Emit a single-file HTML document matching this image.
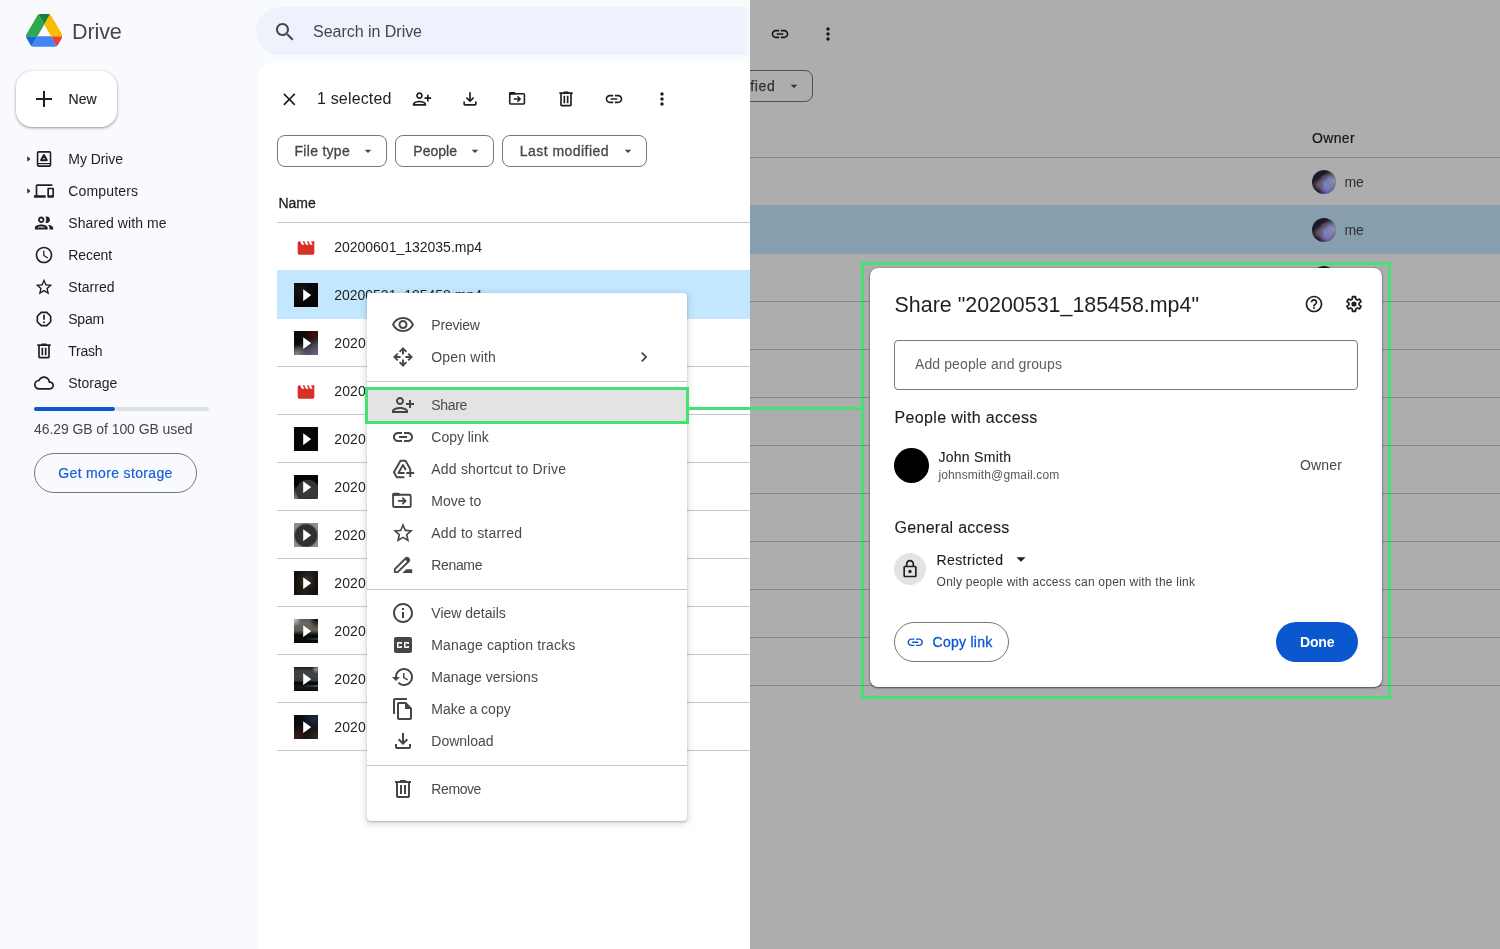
<!DOCTYPE html>
<html><head><meta charset="utf-8"><title>Drive</title>
<style>
html,body{margin:0;padding:0;}
body{width:1500px;height:949px;overflow:hidden;position:relative;background:#f8fafd;font-family:"Liberation Sans",sans-serif;}
.t{position:absolute;white-space:pre;font-family:"Liberation Sans",sans-serif;}
.i{position:absolute;display:block;}
.a{position:absolute;box-sizing:border-box;}
#L{position:absolute;left:0;top:0;width:750px;height:949px;overflow:hidden;background:#f8fafd;}
#R{position:absolute;left:750px;top:0;width:750px;height:949px;overflow:hidden;background:#adadad;}
#W{position:absolute;left:0;top:0;width:1500px;height:949px;will-change:transform;}
</style></head><body>
<div id="W">
<div id="L">
<svg class="i" style="left:25.9px;top:14.06px;width:36.5px;height:32.7px" viewBox="0 0 87.3 78">
<path d="m6.6 66.85 3.85 6.65c.8 1.4 1.95 2.5 3.3 3.3l13.75-23.8h-27.5c0 1.55.4 3.1 1.2 4.5z" fill="#1967d2"/>
<path d="m43.65 25-13.75-23.8c-1.35.8-2.5 1.9-3.3 3.3l-25.4 44a9.06 9.06 0 0 0 -1.2 4.5h27.5z" fill="#2ca84f"/>
<path d="m73.55 76.8c1.35-.8 2.5-1.9 3.3-3.3l1.6-2.75 7.65-13.25c.8-1.4 1.2-2.95 1.2-4.5h-27.502l5.852 11.5z" fill="#ea4335"/>
<path d="m43.65 25 13.75-23.8c-1.35-.8-2.9-1.2-4.5-1.2h-18.5c-1.6 0-3.15.45-4.5 1.2z" fill="#188038"/>
<path d="m59.8 53h-32.3l-13.75 23.8c1.35.8 2.9 1.2 4.5 1.2h50.8c1.6 0 3.15-.45 4.5-1.2z" fill="#4285f4"/>
<path d="m73.4 26.500-12.700-22c-.8-1.400-1.950-2.500-3.300-3.300l-13.750 23.800 16.150 28h27.450c0-1.550-.4-3.100-1.200-4.500z" fill="#fbbc04"/>
</svg>
<div class="t" style="left:72.00px;top:18.73px;font-size:21.6px;line-height:25.92px;color:#444746;letter-spacing:-0.138px;">Drive</div>
<div class="a" style="left:16px;top:71px;width:101px;height:56px;border-radius:16px;background:#fff;box-shadow:0 1px 2px rgba(0,0,0,.26),0 1px 3px 1px rgba(0,0,0,.12)"></div>
<div class="a" style="left:36px;top:97.9px;width:16px;height:1.8px;background:#1f1f1f"></div><div class="a" style="left:43.1px;top:90.8px;width:1.8px;height:16px;background:#1f1f1f"></div>
<div class="t" style="left:68.60px;top:90.85px;font-size:14px;line-height:16.80px;color:#1f1f1f;letter-spacing:-0.005px;-webkit-text-stroke:0.15px #1f1f1f;">New</div>
<div class="t" style="left:68.30px;top:150.85px;font-size:14px;line-height:16.80px;color:#1f1f1f;letter-spacing:-0.067px;">My Drive</div>
<svg class="i" style="left:34.00px;top:149.00px;width:20px;height:20px;" viewBox="0 0 24 24"><g fill="none" stroke="#1f1f1f"><rect x="4.300" y="3.450" width="15.500" height="17.100" rx="1.400" stroke-width="1.900"/><path d="M4.300 17.500h15.500" stroke-width="1.400"/><path d="M11.950 7.350l3.450 6.100H8.500z" stroke-width="2.450" stroke-linejoin="round"/></g></svg>
<div class="t" style="left:68.30px;top:182.85px;font-size:14px;line-height:16.80px;color:#1f1f1f;letter-spacing:0.159px;">Computers</div>
<svg class="i" style="left:34.00px;top:181.00px;width:20px;height:20px;" viewBox="0 0 24 24"><path fill="#1f1f1f" d="M4 6h18V4H4c-1.100 0-2 .9-2 2v11H0v3h14v-3H4V6zm19 2h-6c-.55 0-1 .45-1 1v10c0 .55.45 1 1 1h6c.55 0 1-.45 1-1V9c0-.55-.45-1-1-1zm-1 9h-4v-7h4v7z"/></svg>
<div class="t" style="left:68.30px;top:214.85px;font-size:14px;line-height:16.80px;color:#1f1f1f;letter-spacing:0.073px;">Shared with me</div>
<svg class="i" style="left:33.00px;top:212.30px;width:22px;height:22px;" viewBox="0 0 24 24"><path fill="#1f1f1f" d="M9 13.750c-2.340 0-7 1.170-7 3.500V19h14v-1.750c0-2.330-4.660-3.500-7-3.500zM4.340 17c.84-.58 2.870-1.250 4.660-1.250s3.820.67 4.660 1.250H4.340zM9 12c1.930 0 3.500-1.570 3.500-3.500S10.930 5 9 5 5.500 6.570 5.500 8.500 7.070 12 9 12zm0-5c.83 0 1.500.67 1.500 1.500S9.830 10 9 10s-1.500-.67-1.500-1.500S8.170 7 9 7zm7.040 6.810c1.160.84 1.960 1.960 1.960 3.440V19h4v-1.750c0-2.020-3.500-3.170-5.960-3.440zM15 12c1.930 0 3.500-1.570 3.500-3.500S16.930 5 15 5c-.54 0-1.040.13-1.500.35.63.89 1 1.980 1 3.150s-.37 2.260-1 3.150c.46.22.96.35 1.500.35z"/></svg>
<div class="t" style="left:68.30px;top:246.85px;font-size:14px;line-height:16.80px;color:#1f1f1f;letter-spacing:-0.093px;">Recent</div>
<svg class="i" style="left:34.00px;top:245.00px;width:20px;height:20px;" viewBox="0 0 24 24"><path fill="#1f1f1f" d="M11.99 2C6.470 2 2 6.480 2 12s4.470 10 9.990 10C17.520 22 22 17.520 22 12S17.520 2 11.990 2zM12 20c-4.420 0-8-3.580-8-8s3.580-8 8-8 8 3.580 8 8-3.580 8-8 8zm.5-13H11v6l5.250 3.150.75-1.230-4.500-2.670z"/></svg>
<div class="t" style="left:68.30px;top:278.85px;font-size:14px;line-height:16.80px;color:#1f1f1f;letter-spacing:0.068px;">Starred</div>
<svg class="i" style="left:34.00px;top:277.00px;width:20px;height:20px;" viewBox="0 0 24 24"><path fill="#1f1f1f" d="M22 9.24l-7.19-.62L12 2 9.19 8.63 2 9.24l5.46 4.73L5.82 21 12 17.27 18.180 21l-1.630-7.030L22 9.240zM12 15.400l-3.760 2.270 1-4.280-3.320-2.880 4.380-.380L12 6.100l1.710 4.040 4.380.380-3.320 2.880 1 4.280L12 15.400z"/></svg>
<div class="t" style="left:68.30px;top:310.85px;font-size:14px;line-height:16.80px;color:#1f1f1f;letter-spacing:-0.270px;">Spam</div>
<svg class="i" style="left:34.00px;top:309.00px;width:20px;height:20px;" viewBox="0 0 24 24"><path fill="#1f1f1f" d="M15.730 3H8.270L3 8.270v7.460L8.270 21h7.460L21 15.730V8.270L15.730 3zM19 14.900L14.900 19H9.100L5 14.900V9.100L9.100 5h5.800L19 9.100v5.800zM11 7h2v6h-2zm0 8h2v2h-2z"/></svg>
<div class="t" style="left:68.30px;top:342.85px;font-size:14px;line-height:16.80px;color:#1f1f1f;letter-spacing:-0.236px;">Trash</div>
<svg class="i" style="left:34.00px;top:341.00px;width:20px;height:20px;" viewBox="0 0 24 24"><path fill="#1f1f1f" d="M7 21q-.825 0-1.412-.587Q5 19.825 5 19V6H4V4h5V3h6v1h5v2h-1v13q0 .825-.587 1.413Q17.825 21 17 21zM17 6H7v13h10zM9 17h2V8H9zm4 0h2V8h-2z"/></svg>
<div class="t" style="left:68.30px;top:374.85px;font-size:14px;line-height:16.80px;color:#1f1f1f;letter-spacing:-0.021px;">Storage</div>
<svg class="i" style="left:34.00px;top:373.00px;width:20px;height:20px;" viewBox="0 0 24 24"><path fill="#1f1f1f" d="M19.350 10.040C18.670 6.590 15.640 4 12 4 9.110 4 6.600 5.640 5.350 8.040 2.340 8.360 0 10.910 0 14c0 3.310 2.690 6 6 6h13c2.760 0 5-2.240 5-5 0-2.640-2.050-4.780-4.650-4.960zM19 18H6c-2.210 0-4-1.790-4-4 0-2.050 1.530-3.760 3.560-3.970l1.070-.11.5-.95C8.080 7.140 9.940 6 12 6c2.620 0 4.880 1.860 5.390 4.430l.3 1.500 1.530.11c1.560.1 2.780 1.410 2.780 2.960 0 1.650-1.350 3-3 3z"/></svg>
<svg class="i" style="left:26.5px;top:156px;width:4px;height:6px" viewBox="0 0 4 6"><path d="M0.300 0.300l3 2.700-3 2.700z" fill="#1f1f1f"/></svg>
<svg class="i" style="left:26.5px;top:188px;width:4px;height:6px" viewBox="0 0 4 6"><path d="M0.300 0.300l3 2.700-3 2.700z" fill="#1f1f1f"/></svg>
<div class="a" style="left:34px;top:407px;width:175px;height:4px;border-radius:2px;background:#dde0e3"></div>
<div class="a" style="left:34px;top:407px;width:82px;height:4px;border-radius:2px;background:#f8fafd"></div>
<div class="a" style="left:34px;top:407px;width:80.5px;height:4px;border-radius:2px;background:#0b57d0"></div>
<div class="t" style="left:34.00px;top:420.85px;font-size:14px;line-height:16.80px;color:#444746;letter-spacing:-0.076px;">46.29 GB of 100 GB used</div>
<div class="a" style="left:34px;top:453px;width:163px;height:40px;border-radius:20px;border:1px solid #747775"></div>
<div class="t" style="left:58.30px;top:464.85px;font-size:14px;line-height:16.80px;color:#1a5fd4;letter-spacing:0.341px;-webkit-text-stroke:0.2px #1a5fd4;">Get more storage</div>
<div class="a" style="left:256px;top:7px;width:620px;height:48px;border-radius:24px;background:#edf2fc"></div>
<div class="a" style="left:745px;top:7px;width:5px;height:48px;background:rgba(248,250,253,.55)"></div>
<svg class="i" style="left:272.70px;top:19.90px;width:24px;height:24px;" viewBox="0 0 24 24"><path fill="#444746" d="M15.5 14h-.79l-.28-.27C15.41 12.59 16 11.11 16 9.5 16 5.91 13.09 3 9.5 3S3 5.91 3 9.5 5.91 16 9.5 16c1.61 0 3.09-.59 4.23-1.57l.27.28v.79l5 4.99L20.49 19l-4.99-5zm-6 0C7.01 14 5 11.99 5 9.5S7.01 5 9.5 5 14 7.01 14 9.5 11.99 14 9.5 14z"/></svg>
<div class="t" style="left:313.10px;top:21.69px;font-size:16px;line-height:19.20px;color:#444746;letter-spacing:-0.032px;">Search in Drive</div>
<div class="a" style="left:257px;top:63px;width:620px;height:920px;border-radius:16px;background:#fff"></div>
<svg class="i" style="left:278.65px;top:88.85px;width:20.7px;height:20.7px;" viewBox="0 0 24 24"><path fill="#1f1f1f" d="M19 6.41L17.59 5 12 10.59 6.41 5 5 6.41 10.59 12 5 17.59 6.41 19 12 13.41 17.59 19 19 17.59 13.41 12z"/></svg>
<div class="t" style="left:317.00px;top:88.69px;font-size:16px;line-height:19.20px;color:#1f1f1f;letter-spacing:0.166px;">1 selected</div>
<svg class="i" style="left:412.00px;top:89.00px;width:20px;height:20px;" viewBox="0 0 24 24"><path fill="#1f1f1f" d="M13 8c0-2.21-1.79-4-4-4S5 5.79 5 8s1.79 4 4 4 4-1.79 4-4zm-2 0c0 1.1-.9 2-2 2s-2-.9-2-2 .9-2 2-2 2 .9 2 2zM1 18v2h16v-2c0-2.66-5.33-4-8-4s-8 1.34-8 4zm2 0c.2-.71 3.3-2 6-2 2.69 0 5.78 1.28 6 2H3zm17-3v-3h3v-2h-3V7h-2v3h-3v2h3v3h2z"/></svg>
<svg class="i" style="left:460.00px;top:89.00px;width:20px;height:20px;" viewBox="0 0 24 24"><path fill="#1f1f1f" d="M12 16l-5-5 1.4-1.45 2.6 2.6V4h2v8.15l2.6-2.6L17 11zm-6 4q-.825 0-1.412-.587Q4 18.825 4 18v-3h2v3h12v-3h2v3q0 .825-.587 1.413Q18.825 20 18 20z"/></svg>
<svg class="i" style="left:508.00px;top:89.00px;width:20px;height:20px;" viewBox="0 0 24 24"><g transform="translate(-0.85,-0.45)"><rect x="2.950" y="6.200" width="17.600" height="12.300" rx="1.400" fill="none" stroke="#1f1f1f" stroke-width="1.900"/><path d="M2 7.500V5.600A1.500 1.500 0 0 1 3.500 4.100h5.300l2.600 2.600z" fill="#1f1f1f"/><path d="M7.800 12.400h7.400M12.200 9.200l3.200 3.200-3.200 3.200" fill="none" stroke="#1f1f1f" stroke-width="1.800"/></g></svg>
<svg class="i" style="left:556.00px;top:89.00px;width:20px;height:20px;" viewBox="0 0 24 24"><path fill="#1f1f1f" d="M7 21q-.825 0-1.412-.587Q5 19.825 5 19V6H4V4h5V3h6v1h5v2h-1v13q0 .825-.587 1.413Q17.825 21 17 21zM17 6H7v13h10zM9 17h2V8H9zm4 0h2V8h-2z"/></svg>
<svg class="i" style="left:604.00px;top:89.00px;width:20px;height:20px;" viewBox="0 0 24 24"><path fill="#1f1f1f" d="M3.9 12c0-1.71 1.39-3.1 3.1-3.1h4V7H7c-2.76 0-5 2.24-5 5s2.24 5 5 5h4v-1.9H7c-1.71 0-3.1-1.39-3.1-3.1zM8 13h8v-2H8v2zm9-6h-4v1.9h4c1.71 0 3.1 1.39 3.1 3.1s-1.39 3.1-3.1 3.1h-4V17h4c2.76 0 5-2.24 5-5s-2.24-5-5-5z"/></svg>
<svg class="i" style="left:652.00px;top:89.00px;width:20px;height:20px;" viewBox="0 0 24 24"><path fill="#1f1f1f" d="M12 8c1.1 0 2-.9 2-2s-.9-2-2-2-2 .9-2 2 .9 2 2 2zm0 2c-1.1 0-2 .9-2 2s.9 2 2 2 2-.9 2-2-.9-2-2-2zm0 6c-1.1 0-2 .9-2 2s.9 2 2 2 2-.9 2-2-.9-2-2-2z"/></svg>
<div class="a" style="left:277px;top:135px;width:110px;height:32px;border-radius:8px;border:1px solid #747775"></div>
<div class="t" style="left:294.50px;top:142.85px;font-size:14px;line-height:16.80px;color:#444746;letter-spacing:0.286px;-webkit-text-stroke:0.3px #444746;">File type</div>
<svg class="i" style="left:360.30px;top:142.90px;width:16px;height:16px;" viewBox="0 0 24 24"><path fill="#444746" d="M7 10l5 5 5-5z"/></svg>
<div class="a" style="left:395px;top:135px;width:99px;height:32px;border-radius:8px;border:1px solid #747775"></div>
<div class="t" style="left:413.30px;top:142.85px;font-size:14px;line-height:16.80px;color:#444746;letter-spacing:0.018px;-webkit-text-stroke:0.3px #444746;">People</div>
<svg class="i" style="left:467.20px;top:142.90px;width:16px;height:16px;" viewBox="0 0 24 24"><path fill="#444746" d="M7 10l5 5 5-5z"/></svg>
<div class="a" style="left:502px;top:135px;width:145px;height:32px;border-radius:8px;border:1px solid #747775"></div>
<div class="t" style="left:519.70px;top:142.85px;font-size:14px;line-height:16.80px;color:#444746;letter-spacing:0.471px;-webkit-text-stroke:0.3px #444746;">Last modified</div>
<svg class="i" style="left:620.20px;top:142.90px;width:16px;height:16px;" viewBox="0 0 24 24"><path fill="#444746" d="M7 10l5 5 5-5z"/></svg>
<div class="t" style="left:278.40px;top:194.85px;font-size:14px;line-height:16.80px;color:#1f1f1f;letter-spacing:-0.015px;-webkit-text-stroke:0.3px #1f1f1f;">Name</div>
<div class="a" style="left:277px;top:222px;width:480px;height:1px;background:#c7c7c7"></div>
<div class="a" style="left:277px;top:270px;width:480px;height:1px;background:#c7c7c7"></div>
<svg class="i" style="left:296.00px;top:238.30px;width:20px;height:20px;" viewBox="0 0 24 24"><path fill="#d93025" d="M18 4l2 4h-3l-2-4h-2l2 4h-3l-2-4H8l2 4H7L5 4H4c-1.100 0-1.990.9-1.990 2L2 18c0 1.100.9 2 2 2h16c1.100 0 2-.9 2-2V4h-4z"/></svg>
<div class="t" style="left:334.20px;top:239.15px;font-size:14px;line-height:16.80px;color:#1f1f1f;letter-spacing:-0.006px;">20200601_132035.mp4</div>
<div class="a" style="left:277px;top:270px;width:480px;height:49px;background:#c2e7ff"></div>
<div class="a" style="left:294px;top:283px;width:24px;height:24px;background:radial-gradient(circle at 20% 30%,#151212 0,#050505 60%)"></div>
<svg class="i" style="left:303px;top:288.8px;width:8.4px;height:12.400px" viewBox="0 0 8.400 12.400"><path d="M0.200 0.300v11.800l8-5.900z" fill="#fff"/></svg>
<div class="t" style="left:334.20px;top:287.15px;font-size:14px;line-height:16.80px;color:#1f1f1f;letter-spacing:-0.006px;">20200531_185458.mp4</div>
<div class="a" style="left:277px;top:366px;width:480px;height:1px;background:#c7c7c7"></div>
<div class="a" style="left:294px;top:331px;width:24px;height:24px;background:radial-gradient(circle at 85% 12%,rgba(70,18,14,.9) 0,rgba(70,18,14,0) 38%),radial-gradient(circle at 12% 95%,rgba(150,150,150,.8) 0,rgba(150,150,150,0) 30%),linear-gradient(150deg,#0a0808 0%,#0c0a0a 42%,#45434f 66%,#6c6888 100%)"></div>
<svg class="i" style="left:303px;top:336.8px;width:8.4px;height:12.400px" viewBox="0 0 8.400 12.400"><path d="M0.200 0.300v11.800l8-5.900z" fill="#fff"/></svg>
<div class="t" style="left:334.20px;top:335.15px;font-size:14px;line-height:16.80px;color:#1f1f1f;letter-spacing:0.161px;">2020</div>
<div class="a" style="left:277px;top:414px;width:480px;height:1px;background:#c7c7c7"></div>
<svg class="i" style="left:296.00px;top:382.30px;width:20px;height:20px;" viewBox="0 0 24 24"><path fill="#d93025" d="M18 4l2 4h-3l-2-4h-2l2 4h-3l-2-4H8l2 4H7L5 4H4c-1.100 0-1.990.9-1.990 2L2 18c0 1.100.9 2 2 2h16c1.100 0 2-.9 2-2V4h-4z"/></svg>
<div class="t" style="left:334.20px;top:383.15px;font-size:14px;line-height:16.80px;color:#1f1f1f;letter-spacing:0.161px;">2020</div>
<div class="a" style="left:277px;top:462px;width:480px;height:1px;background:#c7c7c7"></div>
<div class="a" style="left:294px;top:427px;width:24px;height:24px;background:#060606"></div>
<svg class="i" style="left:303px;top:432.8px;width:8.4px;height:12.400px" viewBox="0 0 8.400 12.400"><path d="M0.200 0.300v11.800l8-5.900z" fill="#fff"/></svg>
<div class="t" style="left:334.20px;top:431.15px;font-size:14px;line-height:16.80px;color:#1f1f1f;letter-spacing:0.161px;">2020</div>
<div class="a" style="left:277px;top:510px;width:480px;height:1px;background:#c7c7c7"></div>
<div class="a" style="left:294px;top:475px;width:24px;height:24px;background:radial-gradient(circle at 58% 68%,#3b3b39 0,#343432 52%,rgba(52,52,50,0) 56%),radial-gradient(circle at 0% 100%,#8a8a8a 0,rgba(138,138,138,0) 40%),radial-gradient(circle at 100% 100%,#7a7a78 0,rgba(122,122,120,0) 32%),#040404"></div>
<svg class="i" style="left:303px;top:480.8px;width:8.4px;height:12.400px" viewBox="0 0 8.400 12.400"><path d="M0.200 0.300v11.800l8-5.900z" fill="#fff"/></svg>
<div class="t" style="left:334.20px;top:479.15px;font-size:14px;line-height:16.80px;color:#1f1f1f;letter-spacing:0.161px;">2020</div>
<div class="a" style="left:277px;top:558px;width:480px;height:1px;background:#c7c7c7"></div>
<div class="a" style="left:294px;top:523px;width:24px;height:24px;background:radial-gradient(circle at 50% 52%,#343434 0,#2f2f2f 60%,#8c8c8c 72%,#909090 100%)"></div>
<svg class="i" style="left:303px;top:528.8px;width:8.4px;height:12.400px" viewBox="0 0 8.400 12.400"><path d="M0.200 0.300v11.800l8-5.900z" fill="#fff"/></svg>
<div class="t" style="left:334.20px;top:527.15px;font-size:14px;line-height:16.80px;color:#1f1f1f;letter-spacing:0.161px;">2020</div>
<div class="a" style="left:277px;top:606px;width:480px;height:1px;background:#c7c7c7"></div>
<div class="a" style="left:294px;top:571px;width:24px;height:24px;background:radial-gradient(circle at 55% 40%,#3a322a 0,rgba(58,50,42,0) 45%),linear-gradient(100deg,#0e0b08 0%,#241f1a 50%,#100d0b 100%)"></div>
<svg class="i" style="left:303px;top:576.8px;width:8.4px;height:12.400px" viewBox="0 0 8.400 12.400"><path d="M0.200 0.300v11.800l8-5.900z" fill="#fff"/></svg>
<div class="t" style="left:334.20px;top:575.15px;font-size:14px;line-height:16.80px;color:#1f1f1f;letter-spacing:0.161px;">2020</div>
<div class="a" style="left:277px;top:654px;width:480px;height:1px;background:#c7c7c7"></div>
<div class="a" style="left:294px;top:619px;width:24px;height:24px;background:linear-gradient(90deg,rgba(48,92,74,0) 45%,rgba(58,104,86,.55) 96%) 0 19px/24px 2px no-repeat,radial-gradient(circle at 4% 4%,#c4c4c4 0,rgba(196,196,196,0) 20%),radial-gradient(circle at 96% 4%,#040404 0,rgba(4,4,4,0) 26%),linear-gradient(180deg,#575755 0%,#6c6862 16%,#605a52 48%,#2c2824 60%,#070707 68%,#0a100e 84%,#050505 100%)"></div>
<svg class="i" style="left:303px;top:624.8px;width:8.4px;height:12.400px" viewBox="0 0 8.400 12.400"><path d="M0.200 0.300v11.800l8-5.900z" fill="#fff"/></svg>
<div class="t" style="left:334.20px;top:623.15px;font-size:14px;line-height:16.80px;color:#1f1f1f;letter-spacing:0.161px;">2020</div>
<div class="a" style="left:277px;top:702px;width:480px;height:1px;background:#c7c7c7"></div>
<div class="a" style="left:294px;top:667px;width:24px;height:24px;background:linear-gradient(90deg,rgba(60,110,100,0) 40%,rgba(84,132,120,.6) 97%) 0 18px/24px 2px no-repeat,radial-gradient(circle at 92% 10%,#9a9a9a 0,rgba(154,154,154,0) 14%),linear-gradient(180deg,#17191b 0%,#3a3d40 14%,#40444a 40%,#34383c 58%,#050505 64%,#070808 72%,#131a18 80%,#17130d 92%,#050505 100%)"></div>
<svg class="i" style="left:303px;top:672.8px;width:8.4px;height:12.400px" viewBox="0 0 8.400 12.400"><path d="M0.200 0.300v11.800l8-5.900z" fill="#fff"/></svg>
<div class="t" style="left:334.20px;top:671.15px;font-size:14px;line-height:16.80px;color:#1f1f1f;letter-spacing:0.161px;">2020</div>
<div class="a" style="left:277px;top:750px;width:480px;height:1px;background:#c7c7c7"></div>
<div class="a" style="left:294px;top:715px;width:24px;height:24px;background:radial-gradient(circle at 85% 15%,#1e2a44 0,rgba(30,42,68,0) 45%),radial-gradient(circle at 12% 90%,#3e1c1c 0,rgba(62,28,28,0) 42%),radial-gradient(circle at 90% 92%,#2c2c22 0,rgba(44,44,34,0) 40%),#0a090e"></div>
<svg class="i" style="left:303px;top:720.8px;width:8.4px;height:12.400px" viewBox="0 0 8.400 12.400"><path d="M0.200 0.300v11.800l8-5.900z" fill="#fff"/></svg>
<div class="t" style="left:334.20px;top:719.15px;font-size:14px;line-height:16.80px;color:#1f1f1f;letter-spacing:0.161px;">2020</div>
<div class="a" style="left:367px;top:293px;width:320px;height:528px;border-radius:4px;background:#fff;box-shadow:0 2px 6px 2px rgba(60,64,67,.15),0 1px 2px rgba(60,64,67,.3)"></div>
<div class="a" style="left:367px;top:381px;width:320px;height:1px;background:#c7c7c7"></div>
<div class="a" style="left:367px;top:589px;width:320px;height:1px;background:#c7c7c7"></div>
<div class="a" style="left:367px;top:765px;width:320px;height:1px;background:#c7c7c7"></div>
<div class="a" style="left:365px;top:387px;width:324px;height:37px;border:3px solid #46e173;background:#e3e3e3"></div>
<div class="t" style="left:431.30px;top:316.85px;font-size:14px;line-height:16.80px;color:#484b4a;letter-spacing:-0.200px;">Preview</div>
<svg class="i" style="left:391.00px;top:313.00px;width:24px;height:24px;" viewBox="0 0 24 24"><path fill="#444746" d="M12 6c3.79 0 7.17 2.13 8.82 5.5C19.17 14.87 15.79 17 12 17s-7.17-2.13-8.82-5.5C4.83 8.13 8.21 6 12 6m0-2C7 4 2.73 7.11 1 11.5 2.73 15.89 7 19 12 19s9.27-3.11 11-7.5C21.27 7.11 17 4 12 4zm0 5c1.38 0 2.5 1.12 2.5 2.5S13.38 14 12 14s-2.500-1.12-2.500-2.500S10.620 9 12 9m0-2c-2.480 0-4.500 2.020-4.500 4.500S9.520 16 12 16s4.500-2.020 4.500-4.500S14.480 7 12 7z"/></svg>
<div class="t" style="left:431.30px;top:348.85px;font-size:14px;line-height:16.80px;color:#484b4a;letter-spacing:0.184px;">Open with</div>
<svg class="i" style="left:391.00px;top:345.00px;width:24px;height:24px;" viewBox="0 0 24 24"><g fill="none" stroke="#444746" stroke-width="1.900" stroke-linejoin="miter"><path d="M12 3.600V9.600M8.600 6.800L12 3.400l3.400 3.400"/><path d="M12 20.400V14.400M8.600 17.200L12 20.600l3.400-3.400"/><path d="M3.600 12H9.600M6.800 8.600L3.400 12l3.400 3.400"/><path d="M20.400 12H14.400M17.200 8.600L20.600 12l-3.400 3.400"/></g></svg>
<div class="t" style="left:431.30px;top:396.85px;font-size:14px;line-height:16.80px;color:#484b4a;letter-spacing:-0.312px;">Share</div>
<svg class="i" style="left:391.00px;top:393.00px;width:24px;height:24px;" viewBox="0 0 24 24"><path fill="#444746" d="M13 8c0-2.21-1.79-4-4-4S5 5.79 5 8s1.79 4 4 4 4-1.79 4-4zm-2 0c0 1.1-.9 2-2 2s-2-.9-2-2 .9-2 2-2 2 .9 2 2zM1 18v2h16v-2c0-2.66-5.33-4-8-4s-8 1.34-8 4zm2 0c.2-.71 3.3-2 6-2 2.69 0 5.78 1.28 6 2H3zm17-3v-3h3v-2h-3V7h-2v3h-3v2h3v3h2z"/></svg>
<div class="t" style="left:431.30px;top:428.85px;font-size:14px;line-height:16.80px;color:#484b4a;letter-spacing:-0.022px;">Copy link</div>
<svg class="i" style="left:391.00px;top:425.00px;width:24px;height:24px;" viewBox="0 0 24 24"><path fill="#444746" d="M3.9 12c0-1.71 1.39-3.1 3.1-3.1h4V7H7c-2.76 0-5 2.24-5 5s2.24 5 5 5h4v-1.9H7c-1.71 0-3.1-1.39-3.1-3.1zM8 13h8v-2H8v2zm9-6h-4v1.9h4c1.71 0 3.1 1.39 3.1 3.1s-1.39 3.1-3.1 3.1h-4V17h4c2.76 0 5-2.24 5-5s-2.24-5-5-5z"/></svg>
<div class="t" style="left:431.30px;top:460.85px;font-size:14px;line-height:16.80px;color:#484b4a;letter-spacing:0.198px;">Add shortcut to Drive</div>
<svg class="i" style="left:391.00px;top:457.00px;width:24px;height:24px;" viewBox="0 0 24 24"><path fill="none" stroke="#444746" stroke-width="1.900" stroke-linejoin="round" d="M13.400 20.300H5.800L2.900 15.300 9.500 3.700h5l4.900 8.500M13.600 16H7.400l4.600-8 2.900 5"/><path fill="#444746" d="M20.200 20v-3h3v-1.900h-3v-3h-1.900v3h-3v1.900h3v3z"/></svg>
<div class="t" style="left:431.30px;top:492.85px;font-size:14px;line-height:16.80px;color:#484b4a;letter-spacing:0.027px;">Move to</div>
<svg class="i" style="left:391.00px;top:489.00px;width:24px;height:24px;" viewBox="0 0 24 24"><g transform="translate(-0.85,-0.45)"><rect x="2.950" y="6.200" width="17.600" height="12.300" rx="1.400" fill="none" stroke="#444746" stroke-width="1.900"/><path d="M2 7.500V5.600A1.500 1.500 0 0 1 3.500 4.100h5.300l2.600 2.600z" fill="#444746"/><path d="M7.800 12.400h7.400M12.200 9.200l3.200 3.200-3.200 3.200" fill="none" stroke="#444746" stroke-width="1.800"/></g></svg>
<div class="t" style="left:431.30px;top:524.85px;font-size:14px;line-height:16.80px;color:#484b4a;letter-spacing:0.212px;">Add to starred</div>
<svg class="i" style="left:391.00px;top:521.00px;width:24px;height:24px;" viewBox="0 0 24 24"><path fill="#444746" d="M22 9.24l-7.19-.62L12 2 9.19 8.63 2 9.24l5.46 4.73L5.82 21 12 17.27 18.180 21l-1.630-7.030L22 9.240zM12 15.400l-3.760 2.270 1-4.280-3.320-2.880 4.380-.380L12 6.100l1.710 4.040 4.380.380-3.320 2.880 1 4.280L12 15.400z"/></svg>
<div class="t" style="left:431.30px;top:556.85px;font-size:14px;line-height:16.80px;color:#484b4a;letter-spacing:-0.354px;">Rename</div>
<svg class="i" style="left:391.00px;top:553.00px;width:24px;height:24px;" viewBox="0 0 24 24"><path d="M3.800 19.100v-2.900L15 5a1.200 1.200 0 0 1 1.700 0l1.300 1.300a1.200 1.200 0 0 1 0 1.700L6.700 19.100z" fill="none" stroke="#444746" stroke-width="1.800" stroke-linejoin="round"/><path d="M13.700 6.300l3 3 2-2a1.100 1.100 0 0 0 0-1.500l-1.500-1.500a1.100 1.100 0 0 0-1.500 0z" fill="#444746"/><path d="M15.200 16.200h6v3.800h-9.800z" fill="#444746"/></svg>
<div class="t" style="left:431.30px;top:604.85px;font-size:14px;line-height:16.80px;color:#484b4a;">View details</div>
<svg class="i" style="left:391.00px;top:601.00px;width:24px;height:24px;" viewBox="0 0 24 24"><path fill="#444746" d="M11 7h2v2h-2zm0 4h2v6h-2zm1-9C6.48 2 2 6.48 2 12s4.480 10 10 10 10-4.480 10-10S17.520 2 12 2zm0 18c-4.410 0-8-3.590-8-8s3.590-8 8-8 8 3.590 8 8-3.590 8-8 8z"/></svg>
<div class="t" style="left:431.30px;top:636.85px;font-size:14px;line-height:16.80px;color:#484b4a;letter-spacing:0.159px;">Manage caption tracks</div>
<svg class="i" style="left:391.00px;top:633.00px;width:24px;height:24px;" viewBox="0 0 24 24"><path fill="#444746" d="M19 4H5c-1.110 0-2 .9-2 2v12c0 1.100.890 2 2 2h14c1.100 0 2-.9 2-2V6c0-1.100-.9-2-2-2zm-8 7H9.500v-.500h-2v3h2V13H11v1c0 .550-.450 1-1 1H7c-.550 0-1-.450-1-1v-4c0-.550.450-1 1-1h3c.550 0 1 .450 1 1v1zm7 0h-1.500v-.500h-2v3h2V13H18v1c0 .550-.450 1-1 1h-3c-.550 0-1-.450-1-1v-4c0-.550.450-1 1-1h3c.550 0 1 .450 1 1v1z"/></svg>
<div class="t" style="left:431.30px;top:668.85px;font-size:14px;line-height:16.80px;color:#484b4a;">Manage versions</div>
<svg class="i" style="left:391.00px;top:665.00px;width:24px;height:24px;" viewBox="0 0 24 24"><path fill="#444746" d="M13 3c-4.970 0-9 4.030-9 9H1l3.890 3.890.07.140L9 12H6c0-3.870 3.130-7 7-7s7 3.130 7 7-3.130 7-7 7c-1.930 0-3.680-.790-4.940-2.060l-1.420 1.420C8.270 19.990 10.510 21 13 21c4.970 0 9-4.030 9-9s-4.030-9-9-9zm-1 5v5l4.280 2.540.72-1.210-3.500-2.080V8H12z"/></svg>
<div class="t" style="left:431.30px;top:700.85px;font-size:14px;line-height:16.80px;color:#484b4a;">Make a copy</div>
<svg class="i" style="left:391.00px;top:697.00px;width:24px;height:24px;" viewBox="0 0 24 24"><path fill="#444746" d="M16 1H4c-1.100 0-2 .9-2 2v14h2V3h12V1zm-1 4H8c-1.100 0-1.990.9-1.990 2L6 21c0 1.100.890 2 1.990 2H19c1.100 0 2-.9 2-2V11l-6-6zM8 21V7h6v5h5v9H8z"/></svg>
<div class="t" style="left:431.30px;top:732.85px;font-size:14px;line-height:16.80px;color:#484b4a;">Download</div>
<svg class="i" style="left:391.00px;top:729.00px;width:24px;height:24px;" viewBox="0 0 24 24"><path fill="#444746" d="M12 16l-5-5 1.4-1.45 2.6 2.6V4h2v8.15l2.6-2.6L17 11zm-6 4q-.825 0-1.412-.587Q4 18.825 4 18v-3h2v3h12v-3h2v3q0 .825-.587 1.413Q18.825 20 18 20z"/></svg>
<div class="t" style="left:431.30px;top:780.85px;font-size:14px;line-height:16.80px;color:#484b4a;letter-spacing:-0.407px;">Remove</div>
<svg class="i" style="left:391.00px;top:777.00px;width:24px;height:24px;" viewBox="0 0 24 24"><path fill="#444746" d="M7 21q-.825 0-1.412-.587Q5 19.825 5 19V6H4V4h5V3h6v1h5v2h-1v13q0 .825-.587 1.413Q17.825 21 17 21zM17 6H7v13h10zM9 17h2V8H9zm4 0h2V8h-2z"/></svg>
<svg class="i" style="left:634.00px;top:347.00px;width:20px;height:20px;" viewBox="0 0 24 24"><path fill="#444746" d="M10 6L8.59 7.41 13.17 12l-4.58 4.59L10 18l6-6z"/></svg>
</div>
<div id="R">
<div style="position:absolute;left:-750px;top:0">
<svg class="i" style="left:770.00px;top:24.00px;width:20px;height:20px;" viewBox="0 0 24 24"><path fill="#161616" d="M3.9 12c0-1.71 1.39-3.1 3.1-3.1h4V7H7c-2.76 0-5 2.24-5 5s2.24 5 5 5h4v-1.9H7c-1.71 0-3.1-1.39-3.1-3.1zM8 13h8v-2H8v2zm9-6h-4v1.9h4c1.71 0 3.1 1.39 3.1 3.1s-1.39 3.1-3.1 3.1h-4V17h4c2.76 0 5-2.24 5-5s-2.24-5-5-5z"/></svg>
<svg class="i" style="left:818.00px;top:24.00px;width:20px;height:20px;" viewBox="0 0 24 24"><path fill="#161616" d="M12 8c1.1 0 2-.9 2-2s-.9-2-2-2-2 .9-2 2 .9 2 2 2zm0 2c-1.1 0-2 .9-2 2s.9 2 2 2 2-.9 2-2-.9-2-2-2zm0 6c-1.1 0-2 .9-2 2s.9 2 2 2 2-.9 2-2-.9-2-2-2z"/></svg>
<div class="a" style="left:700px;top:70px;width:113px;height:32px;border-radius:8px;border:1px solid #4f5050"></div>
<div class="t" style="left:750.30px;top:77.85px;font-size:14px;line-height:16.80px;color:#2f3130;letter-spacing:0.605px;-webkit-text-stroke:0.25px #2f3130;">fied</div>
<svg class="i" style="left:786.20px;top:77.90px;width:16px;height:16px;" viewBox="0 0 24 24"><path fill="#2f3130" d="M7 10l5 5 5-5z"/></svg>
<div class="t" style="left:1312.00px;top:130.05px;font-size:14px;line-height:16.80px;color:#161616;letter-spacing:0.353px;-webkit-text-stroke:0.2px #161616;">Owner</div>
<div class="a" style="left:750px;top:157px;width:750px;height:1px;background:#878787"></div>
<div class="a" style="left:750px;top:205px;width:750px;height:49px;background:#869eae"></div>
<div class="a" style="left:750px;top:301px;width:750px;height:1px;background:#878787"></div>
<div class="a" style="left:750px;top:349px;width:750px;height:1px;background:#878787"></div>
<div class="a" style="left:750px;top:397px;width:750px;height:1px;background:#878787"></div>
<div class="a" style="left:750px;top:445px;width:750px;height:1px;background:#878787"></div>
<div class="a" style="left:750px;top:493px;width:750px;height:1px;background:#878787"></div>
<div class="a" style="left:750px;top:541px;width:750px;height:1px;background:#878787"></div>
<div class="a" style="left:750px;top:589px;width:750px;height:1px;background:#878787"></div>
<div class="a" style="left:750px;top:637px;width:750px;height:1px;background:#878787"></div>
<div class="a" style="left:750px;top:685px;width:750px;height:1px;background:#878787"></div>
<div class="a" style="left:1312px;top:170px;width:24px;height:24px;border-radius:12px;background:radial-gradient(circle at 26% 62%,rgba(122,88,84,.95) 0,rgba(122,88,84,0) 26%),radial-gradient(circle at 52% 32%,rgba(98,78,98,.85) 0,rgba(98,78,98,0) 20%),radial-gradient(circle at 58% 60%,#8088c4 0,rgba(128,136,196,.6) 28%,rgba(128,136,196,0) 50%),radial-gradient(circle at 88% 48%,#9696b2 0,rgba(150,150,178,.6) 25%,rgba(150,150,178,0) 48%),radial-gradient(circle at 66% 90%,#6c52aa 0,rgba(108,82,170,0) 32%),#1b1b2a"></div>
<div class="a" style="left:1312px;top:218px;width:24px;height:24px;border-radius:12px;background:radial-gradient(circle at 26% 62%,rgba(122,88,84,.95) 0,rgba(122,88,84,0) 26%),radial-gradient(circle at 52% 32%,rgba(98,78,98,.85) 0,rgba(98,78,98,0) 20%),radial-gradient(circle at 58% 60%,#8088c4 0,rgba(128,136,196,.6) 28%,rgba(128,136,196,0) 50%),radial-gradient(circle at 88% 48%,#9696b2 0,rgba(150,150,178,.6) 25%,rgba(150,150,178,0) 48%),radial-gradient(circle at 66% 90%,#6c52aa 0,rgba(108,82,170,0) 32%),#1b1b2a"></div>
<div class="a" style="left:1312px;top:266px;width:24px;height:24px;border-radius:12px;background:radial-gradient(circle at 26% 62%,rgba(122,88,84,.95) 0,rgba(122,88,84,0) 26%),radial-gradient(circle at 52% 32%,rgba(98,78,98,.85) 0,rgba(98,78,98,0) 20%),radial-gradient(circle at 58% 60%,#8088c4 0,rgba(128,136,196,.6) 28%,rgba(128,136,196,0) 50%),radial-gradient(circle at 88% 48%,#9696b2 0,rgba(150,150,178,.6) 25%,rgba(150,150,178,0) 48%),radial-gradient(circle at 66% 90%,#6c52aa 0,rgba(108,82,170,0) 32%),#1b1b2a"></div>
<div class="t" style="left:1344.60px;top:173.85px;font-size:14px;line-height:16.80px;color:#303131;letter-spacing:-0.277px;">me</div>
<div class="t" style="left:1344.60px;top:221.85px;font-size:14px;line-height:16.80px;color:#303131;letter-spacing:-0.277px;">me</div>
</div>
</div>
<div class="a" style="left:688px;top:407px;width:174px;height:3px;background:#46e173"></div>
<div class="a" style="left:870px;top:268px;width:512px;height:419px;border-radius:8px;background:#fff;box-shadow:0 1px 2px rgba(0,0,0,.5),0 0 1.5px rgba(0,0,0,.45)"></div>
<div class="a" style="left:861px;top:262px;width:530px;height:437px;border:3px solid #46e173"></div>
<div class="a" style="left:861px;top:301px;width:3px;height:1px;background:rgba(90,110,95,.55)"></div><div class="a" style="left:1388px;top:301px;width:3px;height:1px;background:rgba(90,110,95,.55)"></div>
<div class="a" style="left:861px;top:349px;width:3px;height:1px;background:rgba(90,110,95,.55)"></div><div class="a" style="left:1388px;top:349px;width:3px;height:1px;background:rgba(90,110,95,.55)"></div>
<div class="a" style="left:861px;top:397px;width:3px;height:1px;background:rgba(90,110,95,.55)"></div><div class="a" style="left:1388px;top:397px;width:3px;height:1px;background:rgba(90,110,95,.55)"></div>
<div class="a" style="left:861px;top:445px;width:3px;height:1px;background:rgba(90,110,95,.55)"></div><div class="a" style="left:1388px;top:445px;width:3px;height:1px;background:rgba(90,110,95,.55)"></div>
<div class="a" style="left:861px;top:493px;width:3px;height:1px;background:rgba(90,110,95,.55)"></div><div class="a" style="left:1388px;top:493px;width:3px;height:1px;background:rgba(90,110,95,.55)"></div>
<div class="a" style="left:861px;top:541px;width:3px;height:1px;background:rgba(90,110,95,.55)"></div><div class="a" style="left:1388px;top:541px;width:3px;height:1px;background:rgba(90,110,95,.55)"></div>
<div class="a" style="left:861px;top:589px;width:3px;height:1px;background:rgba(90,110,95,.55)"></div><div class="a" style="left:1388px;top:589px;width:3px;height:1px;background:rgba(90,110,95,.55)"></div>
<div class="a" style="left:861px;top:637px;width:3px;height:1px;background:rgba(90,110,95,.55)"></div><div class="a" style="left:1388px;top:637px;width:3px;height:1px;background:rgba(90,110,95,.55)"></div>
<div class="a" style="left:861px;top:685px;width:3px;height:1px;background:rgba(90,110,95,.55)"></div><div class="a" style="left:1388px;top:685px;width:3px;height:1px;background:rgba(90,110,95,.55)"></div>
<div class="t" style="left:894.60px;top:293.45px;font-size:21.4px;line-height:25.68px;color:#1f1f1f;letter-spacing:0.007px;">Share &quot;20200531_185458.mp4&quot;</div>
<svg class="i" style="left:1304.20px;top:293.85px;width:20px;height:20px;" viewBox="0 0 24 24"><path fill="#1f1f1f" d="M11 18h2v-2h-2v2zm1-16C6.480 2 2 6.480 2 12s4.480 10 10 10 10-4.480 10-10S17.520 2 12 2zm0 18c-4.410 0-8-3.590-8-8s3.590-8 8-8 8 3.590 8 8-3.590 8-8 8zm0-14c-2.210 0-4 1.790-4 4h2c0-1.100.9-2 2-2s2 .9 2 2c0 2-3 1.750-3 5h2c0-2.250 3-2.500 3-5 0-2.210-1.790-4-4-4z"/></svg>
<svg class="i" style="left:1344.05px;top:293.80px;width:20px;height:20px;" viewBox="0 0 24 24"><path d="M14.15 6.08 L13.77 3.28 L10.23 3.28 L9.85 6.08 L7.95 7.17 L5.33 6.10 L3.56 9.18 L5.80 10.91 L5.80 13.09 L3.56 14.82 L5.33 17.90 L7.95 16.83 L9.85 17.92 L10.23 20.72 L13.77 20.72 L14.15 17.92 L16.05 16.83 L18.67 17.90 L20.44 14.82 L18.20 13.09 L18.20 10.91 L20.44 9.18 L18.67 6.10 L16.05 7.17Z" fill="none" stroke="#1f1f1f" stroke-width="2.150" stroke-linejoin="round"/><circle cx="12" cy="12" r="3.100" fill="#1f1f1f"/></svg>
<div class="a" style="left:894px;top:340px;width:464px;height:50px;border-radius:4px;border:1px solid #747775"></div>
<div class="t" style="left:915.00px;top:355.85px;font-size:14px;line-height:16.80px;color:#5e5e5e;letter-spacing:0.105px;">Add people and groups</div>
<div class="t" style="left:894.60px;top:408.39px;font-size:16px;line-height:19.20px;color:#1f1f1f;letter-spacing:0.335px;-webkit-text-stroke:0.12px #1f1f1f;">People with access</div>
<div class="a" style="left:893.5px;top:448px;width:35px;height:35px;border-radius:50%;background:#000"></div>
<div class="t" style="left:938.40px;top:448.85px;font-size:14px;line-height:16.80px;color:#1f1f1f;letter-spacing:0.295px;-webkit-text-stroke:0.12px #1f1f1f;">John Smith</div>
<div class="t" style="left:938.40px;top:467.72px;font-size:12px;line-height:14.40px;color:#55585a;letter-spacing:0.146px;">johnsmith@gmail.com</div>
<div class="t" style="left:1300.00px;top:457.15px;font-size:14px;line-height:16.80px;color:#444746;letter-spacing:0.153px;">Owner</div>
<div class="t" style="left:894.60px;top:518.09px;font-size:16px;line-height:19.20px;color:#1f1f1f;letter-spacing:0.273px;-webkit-text-stroke:0.12px #1f1f1f;">General access</div>
<div class="a" style="left:894px;top:553px;width:32px;height:32px;border-radius:50%;background:#e3e3e3"></div>
<svg class="i" style="left:899.80px;top:558.90px;width:20px;height:20px;" viewBox="0 0 24 24"><path fill="#1f1f1f" d="M18 8h-1V6c0-2.760-2.240-5-5-5S7 3.240 7 6v2H6c-1.100 0-2 .9-2 2v10c0 1.100.9 2 2 2h12c1.100 0 2-.9 2-2V10c0-1.100-.9-2-2-2zM9 6c0-1.660 1.340-3 3-3s3 1.340 3 3v2H9V6zm9 14H6V10h12v10zm-6-3c1.100 0 2-.9 2-2s-.9-2-2-2-2 .9-2 2 .9 2 2 2z"/></svg>
<div class="t" style="left:936.60px;top:551.85px;font-size:14px;line-height:16.80px;color:#1f1f1f;letter-spacing:0.377px;-webkit-text-stroke:0.12px #1f1f1f;">Restricted</div>
<svg class="i" style="left:1010.20px;top:548.20px;width:22px;height:22px;" viewBox="0 0 24 24"><path fill="#1f1f1f" d="M7 10l5 5 5-5z"/></svg>
<div class="t" style="left:936.60px;top:575.02px;font-size:12px;line-height:14.40px;color:#444746;letter-spacing:0.227px;">Only people with access can open with the link</div>
<div class="a" style="left:894px;top:622px;width:115px;height:40px;border-radius:20px;border:1px solid #747775"></div>
<svg class="i" style="left:905.75px;top:632.95px;width:18.5px;height:18.5px;" viewBox="0 0 24 24"><path fill="#0b57d0" d="M3.9 12c0-1.71 1.39-3.1 3.1-3.1h4V7H7c-2.76 0-5 2.24-5 5s2.24 5 5 5h4v-1.9H7c-1.71 0-3.1-1.39-3.1-3.1zM8 13h8v-2H8v2zm9-6h-4v1.9h4c1.71 0 3.1 1.39 3.1 3.1s-1.39 3.1-3.1 3.1h-4V17h4c2.76 0 5-2.24 5-5s-2.24-5-5-5z"/></svg>
<div class="t" style="left:932.50px;top:634.05px;font-size:14px;line-height:16.80px;color:#0b57d0;letter-spacing:0.267px;-webkit-text-stroke:0.3px #0b57d0;">Copy link</div>
<div class="a" style="left:1276px;top:622px;width:82px;height:40px;border-radius:20px;background:#0b57d0"></div>
<div class="t" style="left:1299.90px;top:634.05px;font-size:14px;line-height:16.80px;color:#fff;font-weight:700;letter-spacing:-0.125px;">Done</div>
</div>
</body></html>
